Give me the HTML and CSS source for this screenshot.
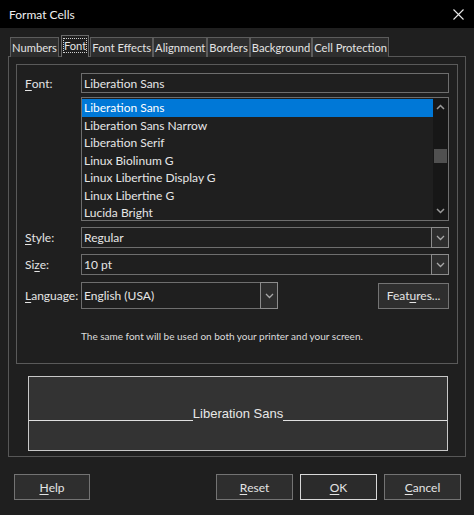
FILE: index.html
```html
<!DOCTYPE html>
<html>
<head>
<meta charset="utf-8">
<link rel="stylesheet" href="styles.css">
</head>
<body>
<div class="window">
  <div class="titlebar">
    <span class="title">Format Cells</span>
    <svg class="close" width="11" height="11" viewBox="0 0 11 11"><path d="M0.5 0.5 L10.5 10.5 M10.5 0.5 L0.5 10.5" stroke="#e8e8e8" stroke-width="1.1" fill="none"/></svg>
  </div>
  <div class="content">
    <div class="tabs">
      <div class="tab">Numbers</div>
      <div class="tab active"><span class="focus">Font</span></div>
      <div class="tab">Font Effects</div>
      <div class="tab">Alignment</div>
      <div class="tab">Borders</div>
      <div class="tab">Background</div>
      <div class="tab">Cell Protection</div>
    </div>
    <div class="panel">
      <div class="group">
        <div class="row row-font">
          <div class="label"><u>F</u>ont:</div>
          <div class="entry">Liberation Sans</div>
        </div>
        <div class="row row-list">
          <div class="label"></div>
          <div class="listbox">
            <div class="items">
              <div class="item selected">Liberation Sans</div>
              <div class="item">Liberation Sans Narrow</div>
              <div class="item">Liberation Serif</div>
              <div class="item">Linux Biolinum G</div>
              <div class="item">Linux Libertine Display G</div>
              <div class="item">Linux Libertine G</div>
              <div class="item">Lucida Bright</div>
            </div>
            <div class="scrollbar">
              <svg class="arrow" width="9" height="6" viewBox="0 0 9 6"><path d="M1 5 L4.5 1.5 L8 5" stroke="#9a9a9a" stroke-width="1.5" fill="none"/></svg>
              <div class="track"><div class="thumb"></div></div>
              <svg class="arrow" width="9" height="6" viewBox="0 0 9 6"><path d="M1 1 L4.5 4.5 L8 1" stroke="#9a9a9a" stroke-width="1.5" fill="none"/></svg>
            </div>
          </div>
        </div>
        <div class="row row-style">
          <div class="label"><u>S</u>tyle:</div>
          <div class="combo"><span class="value">Regular</span><span class="drop"><svg width="9" height="6" viewBox="0 0 9 6"><path d="M1 1 L4.5 4.5 L8 1" stroke="#a8a8a8" stroke-width="1.3" fill="none"/></svg></span></div>
        </div>
        <div class="row row-size">
          <div class="label">Si<u>z</u>e:</div>
          <div class="combo"><span class="value">10 pt</span><span class="drop"><svg width="9" height="6" viewBox="0 0 9 6"><path d="M1 1 L4.5 4.5 L8 1" stroke="#a8a8a8" stroke-width="1.3" fill="none"/></svg></span></div>
        </div>
        <div class="row row-lang">
          <div class="label"><u>L</u>anguage:</div>
          <div class="combo lang"><span class="value">English (USA)</span><span class="drop"><svg width="9" height="6" viewBox="0 0 9 6"><path d="M1 1 L4.5 4.5 L8 1" stroke="#a8a8a8" stroke-width="1.3" fill="none"/></svg></span></div>
          <div class="spacer"></div>
          <div class="button features">Feat<u>u</u>res...</div>
        </div>
        <div class="row row-note">
          <div class="label"></div>
          <div class="note">The same font will be used on both your printer and your screen.</div>
        </div>
      </div>
      <div class="preview">
        <span class="line"></span>
        <span class="sample">Liberation Sans</span>
        <span class="line"></span>
      </div>
    </div>
    <div class="buttons">
      <div class="button"><u>H</u>elp</div>
      <div class="spacer"></div>
      <div class="button"><u>R</u>eset</div>
      <div class="button ok"><u>O</u>K</div>
      <div class="button"><u>C</u>ancel</div>
    </div>
  </div>
</div>
</body>
</html>
```

FILE: styles.css
```css
html, body {
  margin: 0;
  padding: 0;
  background: #1f1f1f;
}
body {
  width: 474px;
  height: 515px;
  overflow: hidden;
  font-family: "Lato", "Noto Sans", sans-serif;
  font-size: 12px;
  color: #e6e6e6;
}
u {
  text-decoration: underline;
  text-underline-offset: 2px;
}
.window {
  width: 474px;
  height: 515px;
  background: #1f1f1f;
  display: flex;
  flex-direction: column;
}
.titlebar {
  height: 28px;
  background: #000;
  display: flex;
  align-items: center;
  justify-content: space-between;
  padding: 0 9px;
  flex: none;
}
.title {
  font-size: 12px;
  color: #f0f0f0;
}
.close {
  margin-right: 1px;
  margin-top: 1px;
}
.content {
  padding: 8px 0 0 8px;
}
.tabs {
  display: flex;
  align-items: flex-end;
  margin-left: 2px;
  height: 21px;
  position: relative;
  z-index: 1;
  margin-bottom: -1px;
}
.tab {
  height: 19px;
  line-height: 19px;
  padding: 0 1px;
  border: 1px solid #5c5c5c;
  border-bottom: none;
  background: #2e2e2e;
  margin-right: 0;
  color: #e4e4e4;
  white-space: nowrap;
  font-size: 11.2px;
}
.tab.active {
  height: 21px;
  line-height: 20px;
  background: #1f1f1f;
  border-color: #6a6a6a;
  padding: 0 1px;
  margin: 0 1px 0 2px;
}
.focus {
  outline: 1px dotted #cfcfcf;
  outline-offset: -1px;
  padding: 1px 1px;
}
.panel {
  border: 1px solid #575757;
  padding: 7px;
  box-sizing: border-box;
  width: 458px;
  height: 401px;
}
.group {
  border: 1px solid #5a5a5a;
  height: 300px;
  box-sizing: border-box;
  padding: 8px 8px 0 8px;
}
.row {
  display: flex;
}
.label {
  width: 56px;
  flex: none;
  display: flex;
  align-items: center;
  color: #e4e4e4;
}
.row-font { height: 20px; }
.row-list { height: 124px; margin-top: 4px; }
.row-style { height: 21px; margin-top: 6px; }
.row-size { height: 21px; margin-top: 6px; }
.row-lang { height: 27px; margin-top: 7px; align-items: center; }
.row-note { margin-top: 21px; }
.entry {
  flex: 1;
  border: 1px solid #6e6e6e;
  background: #1f1f1f;
  box-sizing: border-box;
  display: flex;
  align-items: center;
  padding-left: 2px;
}
.listbox {
  flex: 1;
  border: 1px solid #6e6e6e;
  box-sizing: border-box;
  display: flex;
  background: #1f1f1f;
}
.items {
  flex: 1;
  padding-top: 1px;
}
.item {
  height: 17.5px;
  line-height: 17.5px;
  padding-left: 2px;
  white-space: nowrap;
}
.item.selected {
  background: #0078d7;
  color: #fff;
}
.scrollbar {
  width: 15px;
  background: #171717;
  display: flex;
  flex-direction: column;
  align-items: center;
}
.scrollbar .arrow {
  flex: none;
  margin: 6px 0;
}
.track {
  flex: 1;
  width: 100%;
  padding-top: 33px;
}
.thumb {
  height: 14px;
  width: 13px;
  margin: 0 auto;
  background: #505050;
}
.combo {
  flex: 1;
  border: 1px solid #6e6e6e;
  box-sizing: border-box;
  display: flex;
  background: #1f1f1f;
}
.combo .value {
  flex: 1;
  display: flex;
  align-items: center;
  padding-left: 2px;
}
.combo .drop {
  width: 16px;
  border: 1px solid #8c8c8c;
  margin: -1px -1px -1px 0;
  background: #2e2e2e;
  display: flex;
  align-items: center;
  justify-content: center;
}
.combo.lang {
  flex: none;
  width: 197px;
  height: 27px;
}
.spacer {
  flex: 1;
}
.button {
  border: 1px solid #737373;
  background: #2e2e2e;
  display: flex;
  align-items: center;
  justify-content: center;
  box-sizing: border-box;
  width: 76px;
  height: 26px;
  color: #e4e4e4;
}
.features {
  width: 71px;
  height: 26px;
}
.note {
  font-size: 10px;
  color: #dcdcdc;
}
.preview {
  margin: 12px 10px 0 12px;
  height: 75px;
  box-sizing: border-box;
  border: 1px solid #c8c8c8;
  background: #333333;
  display: flex;
  align-items: flex-start;
  padding-top: 30px;
}
.preview .line {
  flex: 1;
  height: 13px;
  border-bottom: 1px solid #e0e0e0;
}
.sample {
  font-family: "Liberation Sans", Arial, sans-serif;
  font-size: 13px;
  line-height: 14px;
  color: #e8e8e8;
}
.buttons {
  display: flex;
  margin-top: 17px;
  padding-left: 6px;
  gap: 7px;
  width: 447px;
}
.buttons .button {
  width: 77px;
}
.buttons .button:first-child {
  width: 76px;
}
.button.ok {
  border-color: #d8d8d8;
  background: #2b2b2b;
}
```
